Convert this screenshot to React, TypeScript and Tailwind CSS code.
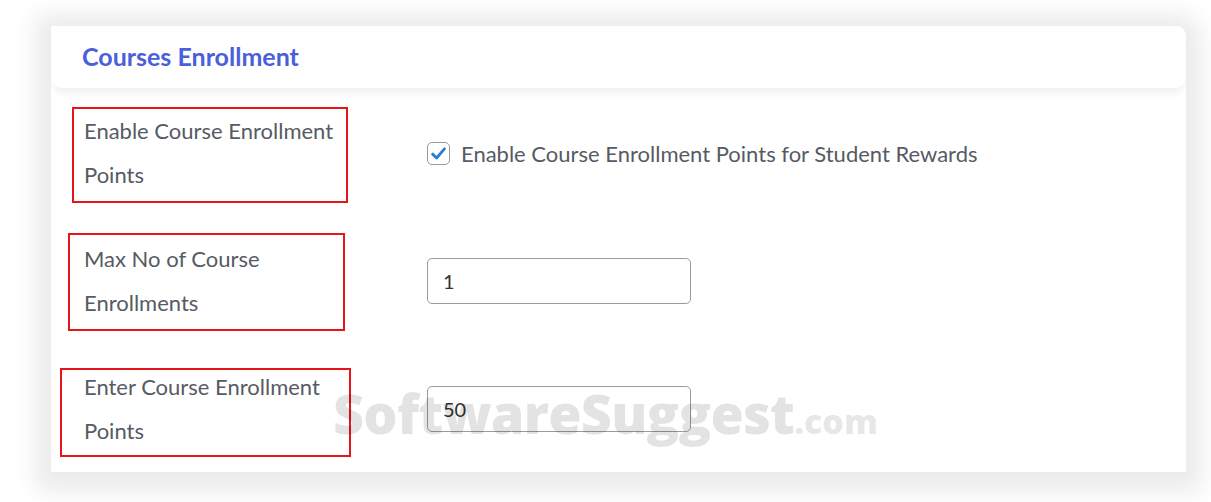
import React from 'react';

type Row = {
  label: string;
  box: string;
  control: React.ReactNode;
};

const font = { fontFamily: 'Lato, "Noto Sans", sans-serif' };

function CheckIcon() {
  return (
    <span className="flex h-[23px] w-[23px] items-center justify-center rounded-[5px] border border-[#9a9a9a] bg-white">
      <svg viewBox="0 0 16 16" className="h-[17px] w-[17px]">
        <path d="M2.5 8.6 6.2 12.2 13.6 3.6" fill="none" stroke="#2f7fd0" strokeWidth="2.7" strokeLinecap="round" strokeLinejoin="round" />
      </svg>
    </span>
  );
}

function TextBox({ value }: { value: string }) {
  return (
    <div className="flex h-[46px] w-[264px] items-center rounded-[5px] border border-[#9b9b9b] bg-white px-[15px] text-[20px] text-[#333]">
      {value}
    </div>
  );
}

const rows: Row[] = [
  {
    label: 'Enable Course Enrollment Points',
    box: 'left-[-12px] top-[-2px] w-[276px] h-[96px]',
    control: (
      <label className="flex items-center gap-[11px] text-[22px] text-[#565b63]">
        <CheckIcon />
        Enable Course Enrollment Points for Student Rewards
      </label>
    ),
  },
  {
    label: 'Max No of Course Enrollments',
    box: 'left-[-16px] top-[-4px] w-[277px] h-[98px]',
    control: <TextBox value="1" />,
  },
  {
    label: 'Enter Course Enrollment Points',
    box: 'left-[-24px] top-[3px] w-[291px] h-[89px]',
    control: <TextBox value="50" />,
  },
];

export default function App() {
  return (
    <div className="relative h-[502px] w-[1211px] overflow-hidden bg-white pl-[51px] pt-[26px]" style={font}>
      <div className="h-[446px] w-[1135px] rounded-tr-[10px] bg-white shadow-[0_4px_22px_16px_rgba(0,0,0,0.08)]">
        <div className="relative z-10 flex h-[62px] items-center rounded-b-[12px] rounded-tr-[10px] bg-white pl-[31px] shadow-[0_8px_6px_-2px_rgba(0,0,0,0.05)]">
          <h2 className="text-[25px] font-bold text-[#4a5fdb]">Courses Enrollment</h2>
        </div>

        <div className="flex flex-col gap-[40px] pt-[21px]">
          {rows.map((row) => (
            <div key={row.label} className="flex h-[88px] items-center">
              <div className="w-[376px] pl-[33px]">
                <div className="relative w-[262px] text-[22px] leading-[44px] text-[#565b63]">
                  {row.label}
                  <span className={`pointer-events-none absolute border-2 border-[#e4161b] ${row.box}`} />
                </div>
              </div>
              {row.control}
            </div>
          ))}
        </div>
      </div>

      {/* watermark */}
      <div className="pointer-events-none absolute left-[333px] top-[373px] flex items-baseline text-[rgba(0,0,0,0.11)]" style={{ fontFamily: '"Open Sans", Lato, sans-serif' }}>
        <span className="text-[54px] font-extrabold tracking-[-0.8px]">SoftwareSuggest</span>
        <span className="text-[34px] font-extrabold">.com</span>
      </div>
    </div>
  );
}
